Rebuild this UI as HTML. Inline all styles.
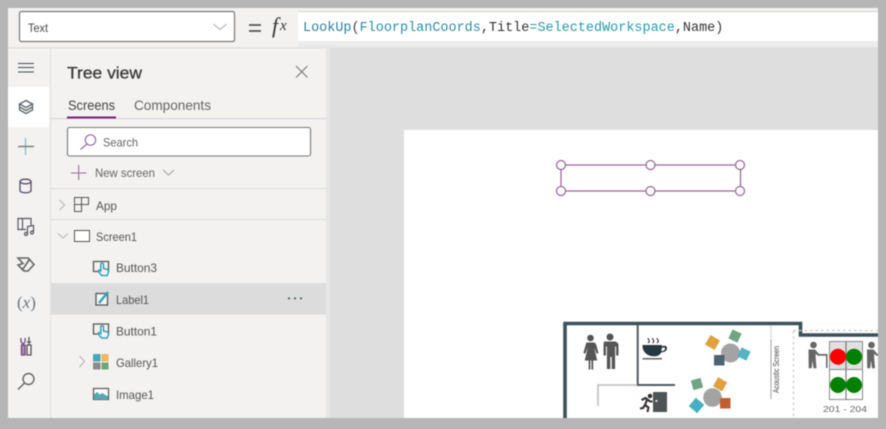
<!DOCTYPE html>
<html><head><meta charset="utf-8"><style>
html,body{margin:0;padding:0;background:#b6b6b6;width:886px;height:429px;overflow:hidden}
svg{display:block;filter:blur(.45px)}
text{font-family:"Liberation Sans",sans-serif;fill:#4a4847;font-size:12px}
.m{font-family:"Liberation Mono",monospace;font-size:13.47px}
</style></head><body>
<svg width="886" height="429" viewBox="0 0 886 429" xmlns="http://www.w3.org/2000/svg">
<rect width="886" height="429" fill="#b6b6b6"/>
<rect x="8" y="8" width="870" height="410" fill="#f3f2f1"/>
<!-- formula bar -->
<rect x="8" y="47" width="870" height="1.500" fill="#e3e2e1"/>
<rect x="19.500" y="11.500" width="215" height="30" rx="2" fill="#fff" stroke="#777" stroke-width="1.200"/>
<text x="28" y="32" textLength="20" lengthAdjust="spacingAndGlyphs">Text</text>
<path d="M213.500 24l6.500 5.500 6.500-5.500" fill="none" stroke="#a8a6a4"/>
<path d="M249 25h12M249 31h12" stroke="#555" stroke-width="1.800" fill="none"/>
<text x="272" y="33" style="font-family:'Liberation Serif',serif;font-style:italic;font-size:22px;fill:#333">f</text>
<text x="280" y="30" style="font-family:'Liberation Serif',serif;font-style:italic;font-size:15px;fill:#333">x</text>
<rect x="298" y="11" width="580" height="1.200" fill="#d4d4d4"/>
<rect x="298" y="12" width="580" height="29" fill="#fff"/>
<rect x="298" y="41" width="580" height="6" fill="#ececec"/>
<text x="303" y="31" class="m" style="fill:#2f7f9f">LookUp<tspan fill="#444">(</tspan><tspan fill="#2b8ea3">FloorplanCoords</tspan><tspan fill="#333">,Title</tspan><tspan fill="#2f9c9c">=</tspan><tspan fill="#2b97a8">SelectedWorkspace</tspan><tspan fill="#333">,Name)</tspan></text>
<!-- rail -->
<rect x="50" y="48" width="1.200" height="370" fill="#e3e2e1"/>
<rect x="8" y="87" width="41" height="40" fill="#fff"/>
<path d="M18 63.500h16M18 67.500h16M18 72h16" stroke="#3d4a52" stroke-width="1.100"/>
<g fill="none" stroke="#5a6268" stroke-width="1.300"><path d="M26 100.500l6.500 3.500-6.500 3.500-6.500-3.500z"/><path d="M19.500 104v3l6.500 3.500 6.500-3.500v-3M19.500 107v3l6.500 3.500 6.500-3.500v-3"/></g>
<path d="M25.500 138v17" stroke="#8fb8c6" stroke-width="1.300"/><path d="M18 146.500h16" stroke="#777" stroke-width="1.400"/>
<g fill="none" stroke="#554a68" stroke-width="1.300"><ellipse cx="25.500" cy="181.500" rx="5.500" ry="2.300"/><path d="M20 181.500v9c0 3 11 3 11 0v-9"/></g>
<g fill="none" stroke="#5b5560" stroke-width="1.200"><path d="M31 225v-6.500h-13v11h8"/><path d="M22.500 218.500v11"/><circle cx="26" cy="234" r="1.500"/><circle cx="32" cy="232.500" r="1.500"/><path d="M27.500 234v-7.500l6-1v7"/></g>
<g fill="none" stroke="#666" stroke-width="1.600"><path d="M18 258h10l6 6.500-6 6.500H24l-6-6 5-1.500-5-5.500z"/><path d="M22 270.500l8-12"/></g>
<text x="17" y="308" style="font-family:'Liberation Serif',serif;font-size:17px;fill:#6a7680">(<tspan font-style="italic">x</tspan>)</text>
<g fill="none" stroke="#6b4a78" stroke-width="1.300"><path d="M21.500 345h3.500v10h-3.500z" fill="#b58cc0"/><path d="M21 338c-.5 3 .5 5 2 6 2-1 2.500-3 2-6"/><path d="M29 337v8M27 345h4v10h-4z" stroke="#555"/><path d="M27 342h4" stroke="#555"/></g>
<g fill="none" stroke="#666" stroke-width="1.400"><circle cx="28.500" cy="379" r="5.500"/><path d="M24.500 383l-6.500 6.500"/></g>
<!-- tree pane -->
<rect x="326" y="48" width="4" height="370" fill="#e6e6e6"/>
<text x="67" y="78.500" textLength="75" lengthAdjust="spacingAndGlyphs" style="font-size:17px;fill:#3b3a39;stroke:#3b3a39;stroke-width:.3">Tree view</text>
<path d="M296 66l11.500 11.500M307.500 66L296 77.500" stroke="#777" stroke-width="1.100"/>
<text x="68" y="110" textLength="47" lengthAdjust="spacingAndGlyphs" style="font-size:14px;fill:#444">Screens</text>
<text x="134" y="110" textLength="77" lengthAdjust="spacingAndGlyphs" style="font-size:14px;fill:#666">Components</text>
<rect x="51" y="118" width="275" height="1.200" fill="#d9d4d9"/>
<rect x="67" y="116.500" width="49" height="2" fill="#742774"/>
<rect x="67.500" y="127.500" width="243" height="28.500" rx="2" fill="#fff" stroke="#777" stroke-width="1.100"/>
<g fill="none" stroke="#9a6da3" stroke-width="1.200"><circle cx="90.500" cy="140" r="5.200"/><path d="M87 144l-6.500 5.500"/></g>
<text x="103" y="146.500" textLength="35" lengthAdjust="spacingAndGlyphs" style="fill:#666">Search</text>
<path d="M71 173h15.500M78.700 165v15" stroke="#9a6da3" stroke-width="1.100"/>
<text x="95" y="177" textLength="60" lengthAdjust="spacingAndGlyphs" style="fill:#666">New screen</text>
<path d="M163 170l5.500 5 5.500-5" fill="none" stroke="#999"/>
<rect x="51" y="188" width="275" height="1.200" fill="#dededd"/>
<path d="M59.500 200l5 5-5 5" fill="none" stroke="#b4b2b0"/>
<path d="M74.500 197.500h14v7h-14zM74.500 204.500h7v7h-7zM81.500 197.500v7" fill="none" stroke="#555"/>
<text x="96" y="210" textLength="21" lengthAdjust="spacingAndGlyphs" style="fill:#555">App</text>
<rect x="51" y="219" width="275" height="1.200" fill="#dededd"/>
<path d="M58 233.500l5 4.500 5-4.500" fill="none" stroke="#b0b0b0"/>
<rect x="74.500" y="230.500" width="15" height="11" fill="#fff" stroke="#555"/>
<text x="96" y="241" textLength="41" lengthAdjust="spacingAndGlyphs" style="fill:#555">Screen1</text>
<!-- Button3 -->
<path d="M98 271.500h-4.500v-10h15v10h-.5" fill="none" stroke="#555" stroke-width="1.300"/>
<path d="M100.800 272v-7.500c0-1.800 2.700-1.800 2.700 0v4l3.200.7c1.300.3 1.900 1.300 1.700 2.600-.2 1.500-.6 2.700-1.400 3.800h-5c-1.500-1.200-3-3-3.600-4.600-.3-1.200 1.200-1.700 2.400.1z" fill="#f3f2f1" stroke="#27a0b8" stroke-width="1.400"/>
<text x="116" y="272" textLength="41" lengthAdjust="spacingAndGlyphs" style="fill:#555">Button3</text>
<!-- Label1 -->
<rect x="51" y="283" width="275" height="31.500" fill="#dcdcdc"/>
<rect x="96" y="293.500" width="11.500" height="11.500" fill="#f6f6f6" stroke="#555" stroke-width="1.300"/>
<path d="M99 303l9-11" stroke="#2fa3bc" stroke-width="2.400"/>
<text x="116" y="304" textLength="33" lengthAdjust="spacingAndGlyphs" style="fill:#555">Label1</text>
<g fill="#4a6060"><rect x="288" y="297.500" width="2" height="1.800"/><rect x="294" y="297.500" width="2" height="1.800"/><rect x="300" y="297.500" width="2" height="1.800"/></g>
<!-- Button1 -->
<path d="M98 334h-4.500v-10h15v10h-.5" fill="none" stroke="#555" stroke-width="1.300"/>
<path d="M100.800 334.500v-7.500c0-1.800 2.700-1.800 2.700 0v4l3.200.7c1.300.3 1.900 1.300 1.700 2.600-.2 1.500-.6 2.700-1.400 3.800h-5c-1.500-1.200-3-3-3.600-4.600-.3-1.200 1.200-1.700 2.400.1z" fill="#f3f2f1" stroke="#27a0b8" stroke-width="1.400"/>
<text x="116" y="335.500" textLength="41" lengthAdjust="spacingAndGlyphs" style="fill:#555">Button1</text>
<!-- Gallery1 -->
<path d="M79.500 356l5 5.500-5 5.500" fill="none" stroke="#b4b2b0"/>
<rect x="93" y="354" width="7.500" height="7.500" fill="#4aa6b8"/><rect x="101.500" y="354" width="7" height="7.500" fill="#eeb565"/>
<rect x="93" y="362.500" width="7.500" height="7" fill="#8b8b8b"/><rect x="101.500" y="362.500" width="7" height="7" fill="#6fa578"/>
<text x="116" y="367" textLength="42" lengthAdjust="spacingAndGlyphs" style="fill:#555">Gallery1</text>
<!-- Image1 -->
<rect x="93.500" y="388.500" width="15" height="11" fill="#fff" stroke="#555" stroke-width="1.200"/>
<path d="M94 399.500v-5l3-2.500 3 2.500 2.500-1.500 3 2 2.500 1v3.500z" fill="#55a9b3"/>
<text x="116" y="399" textLength="38" lengthAdjust="spacingAndGlyphs" style="fill:#555">Image1</text>
<!-- canvas -->
<rect x="330" y="48" width="548" height="370" fill="#dedede"/>
<rect x="404" y="130" width="474" height="288" fill="#fff"/>
<!-- selection -->
<rect x="561" y="165" width="179.500" height="26" fill="none" stroke="#9b6a9f" stroke-width="1.300"/>
<g fill="#fff" stroke="#9b6a9f" stroke-width="1.300">
<circle cx="561" cy="165" r="4.500"/><circle cx="650.500" cy="165" r="4.500"/><circle cx="740" cy="165" r="4.500"/>
<circle cx="561" cy="191" r="4.500"/><circle cx="650.500" cy="191" r="4.500"/><circle cx="740" cy="191" r="4.500"/></g>
<!-- floorplan -->
<path d="M565 418V323.500H800.500V335H878" fill="none" stroke="#3d5158" stroke-width="3.600"/>
<path d="M637.700 325V385H675" fill="none" stroke="#4f5a60" stroke-width="2"/>
<path d="M637 385H598V406" fill="none" stroke="#c4c4c4" stroke-width="1.800"/>
<!-- woman and man -->
<g fill="#555"><circle cx="590.500" cy="338" r="3.300"/><path d="M586.500 342.500h8l1.500 1.500 2.500 9-1.800.7-2.500-6 3 12.800h-4v9h-1.700v-9h-1.100v9h-1.700v-9h-4l3-12.800-2.500 6-1.800-.7 2.500-9z"/><circle cx="610" cy="337" r="3.500"/><path d="M604 341.500h12l2.500 2.500v11.500h-2.400v-9h-1v22.500h-3.400v-12h-1.400v12h-3.400v-22.500h-1v9h-2.400V344z"/></g>
<!-- coffee -->
<path d="M648 343c3-2 0-3 0-5M652.500 343c3-2 0-3 0-5M657 343c3-2 0-3 0-5" fill="none" stroke="#333" stroke-width="1.100"/>
<path d="M642.500 345h19.500v1.500c3-1.500 5-.5 5 1.800 0 2.500-2.500 4-5.800 4.200-1.200 2.200-3 3.700-5.700 3.700h-2.500c-5.500 0-10.500-4.500-10.500-10.200zm19.300 3.200l-.4 3c2.200-.2 3.700-1.300 3.600-2.700 0-1.200-1.600-1.200-3.200-.3z" fill="#25373f" fill-rule="evenodd"/>
<rect x="642.500" y="358" width="19.500" height="1.500" fill="#666"/>
<!-- exit -->
<rect x="653" y="392" width="14" height="20" fill="#4e5356"/><rect x="655.500" y="400" width="1.800" height="1.800" fill="#fff"/>
<g fill="none" stroke="#333" stroke-width="2.100"><path d="M647.500 398.500l-2.500 6.500 3.500 2.500-1 4.500M645 405l-2 3-3 .5M641.500 400l4-2 4.500 3.500 2.500 0"/></g><circle cx="650" cy="396" r="2.300" fill="#333"/>
<!-- table 1 -->
<circle cx="730.500" cy="353" r="9.500" fill="#a3a3a3"/>
<rect x="707" y="337" width="11" height="11" fill="#e0a13f" transform="rotate(30 712.500 342.500)"/>
<rect x="730" y="331" width="10" height="10" fill="#6fa585" transform="rotate(25 735 336)"/>
<rect x="739" y="349" width="10" height="10" fill="#52b4c5" transform="rotate(25 744 354)"/>
<rect x="714" y="355" width="10.500" height="10.500" fill="#4d6470"/>
<!-- table 2 -->
<circle cx="712.500" cy="397.500" r="9.300" fill="#a3a3a3"/>
<rect x="692" y="379" width="10" height="10" fill="#6fa585" transform="rotate(-15 697 384)"/>
<rect x="715" y="379" width="10.500" height="10.500" fill="#e0a13f" transform="rotate(30 720 384)"/>
<rect x="691" y="400" width="11" height="11" fill="#47afc2" transform="rotate(40 696.500 405.500)"/>
<rect x="720" y="398" width="10.500" height="10.500" fill="#bf5f33"/>
<!-- acoustic screen -->
<path d="M771 326v14" stroke="#ccc" stroke-width="1.500" stroke-dasharray="1.500 1"/>
<path d="M771 340v59" stroke="#999" stroke-width=".9"/>
<text transform="translate(779 393) rotate(-90)" textLength="47" lengthAdjust="spacingAndGlyphs" style="font-size:8px;fill:#444">Acoustic Screen</text>
<path d="M793.500 331v87M793.500 330.500H878" stroke="#c9c9c9" stroke-width="1.300" stroke-dasharray="2.500 3" fill="none"/>
<!-- desks -->
<rect x="829.500" y="341.500" width="33" height="58" fill="#fff" stroke="#8a8a8a"/>
<rect x="830" y="342" width="32" height="27" fill="#e1e1e1"/>
<path d="M846 341v59" stroke="#777" stroke-width="1.200"/><path d="M829.500 369.500H862.500" stroke="#8a8a8a"/>
<circle cx="838" cy="356.700" r="8" fill="#ff0000"/><circle cx="854" cy="356.700" r="8" fill="#008000"/>
<circle cx="838" cy="385" r="8" fill="#008000"/><circle cx="854" cy="385" r="8" fill="#008000"/>
<!-- people -->
<g fill="#666"><circle cx="813.500" cy="345" r="3.300"/><path d="M808.500 349.500h6.500l4 4.500h8.500v1.700h-9.500l-2.300-2v4.500l.8 10h-3l-1-8-.8 8h-3z"/><path d="M826 355h1.500v13H826z"/>
<circle cx="871.500" cy="345" r="3.300"/><path d="M867 349.500h6.500l4 4.500h.5v1.700h-1.500l-2.300-2v4.500l.8 10h-3l-1-8-.8 8h-3z"/></g>
<text x="823" y="412" textLength="44" lengthAdjust="spacingAndGlyphs" style="font-size:8.500px;fill:#666">201 - 204</text>
</svg>
</body></html>
